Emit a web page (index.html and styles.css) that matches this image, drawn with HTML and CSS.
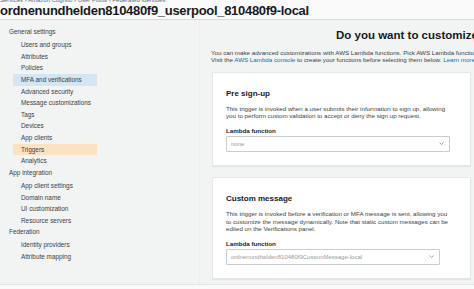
FILE: index.html
```html
<!DOCTYPE html>
<html lang="en">
<head>
  <meta charset="UTF-8"/>
  <title>User pool triggers</title>
  <link rel="stylesheet" href="styles.css">
</head>
<body>
<header class="top">
  <div class="crumbs">Services &rsaquo; Amazon Cognito &rsaquo; User Pools &rsaquo; Federated Identities</div>
  <h1>ordnenundhelden810480f9_userpool_810480f9-local</h1>
</header>

<div class="layout">
  <!-- Side navigation -->
  <nav class="side">
    <div class="group">General settings</div>
    <ul>
      <li>Users and groups</li>
      <li>Attributes</li>
      <li>Policies</li>
      <li class="hl-blue">MFA and verifications</li>
      <li>Advanced security</li>
      <li>Message customizations</li>
      <li>Tags</li>
      <li>Devices</li>
      <li>App clients</li>
      <li class="hl-orange">Triggers</li>
      <li>Analytics</li>
    </ul>
    <div class="group">App integration</div>
    <ul>
      <li>App client settings</li>
      <li>Domain name</li>
      <li>UI customization</li>
      <li>Resource servers</li>
    </ul>
    <div class="group">Federation</div>
    <ul>
      <li>Identity providers</li>
      <li>Attribute mapping</li>
    </ul>
  </nav>

  <!-- Triggers -->
  <main class="main">
    <h2>Do you want to customize workflows with triggers?</h2>
    <p class="intro">
      You can make advanced customizations with AWS Lambda functions. Pick AWS Lambda functions to trigger during user pool operations.<br>
      Visit the <a href="#">AWS Lambda console</a> to create your functions before selecting them below. <a href="#">Learn more.</a>
    </p>

    <section class="card">
      <h3>Pre sign-up</h3>
      <p class="desc">This trigger is invoked when a user submits their information to sign up, allowing you to perform custom validation to accept or deny the sign up request.</p>
      <label>Lambda function</label>
      <div class="select">
        <span class="value">none</span>
        <svg width="5" height="3" viewBox="0 0 5 3"><path d="M0.5 0.5 L2.5 2.5 L4.5 0.5" fill="none" stroke="#8a8a8a" stroke-width="0.8"/></svg>
      </div>
    </section>

    <section class="card">
      <h3>Custom message</h3>
      <p class="desc">This trigger is invoked before a verification or MFA message is sent, allowing you to customize the message dynamically. Note that static custom messages can be edited on the Verifications panel.</p>
      <label>Lambda function</label>
      <div class="select narrow">
        <span class="value">ordnenundhelden810480f9CustomMessage-local</span>
        <svg width="5" height="3" viewBox="0 0 5 3"><path d="M0.5 0.5 L2.5 2.5 L4.5 0.5" fill="none" stroke="#8a8a8a" stroke-width="0.8"/></svg>
      </div>
    </section>
  </main>
</div>

<footer class="bottom"></footer>
</body>
</html>
```

FILE: styles.css
```css
:root{
  --bg:#f2f3f3;
  --text:#3b3f44;
  --dark:#16191f;
  --link:#0073bb;
  --line:#d5dbdb;
}
*{margin:0;padding:0;box-sizing:border-box}
body{background:#fafafa;color:var(--text);font-family:"Liberation Sans",Arial,Helvetica,sans-serif;overflow:hidden;height:289px}

/* Header */
.top{background:#fafafa;border-bottom:1px solid var(--line)}
.crumbs{height:3px;overflow:hidden;font-size:6px;line-height:1px;color:#5a6b86;white-space:nowrap}
.top h1{font-size:13px;line-height:16px;font-weight:700;color:var(--dark);white-space:nowrap;letter-spacing:-0.3px}

/* Layout */
.layout{display:flex;height:265px;border-bottom:1px solid #e3e5e5;background:var(--bg)}
.side{flex:0 0 200px;padding-top:6px;font-size:6.4px;color:var(--text);border-right:1px solid #eceded}
.side ul{list-style:none}
.group{padding-left:9px;line-height:11.6px;margin-bottom:1.6px}
.side li{margin-left:13px;width:84px;padding-left:8px;line-height:11.6px;white-space:nowrap}
.side li.hl-blue{background:#d4e6f3}
.side li.hl-orange{background:#fbe2c3}

/* Main */
.main{flex:1;overflow:hidden;padding:8px 0 0 11px}
.main h2{font-size:11.5px;line-height:14px;font-weight:700;color:var(--dark);padding-left:125px;white-space:nowrap}
.intro{margin-top:7px;font-size:6.2px;line-height:7.3px;white-space:nowrap;color:var(--text)}
.intro a{color:var(--link);text-decoration:none}

.card{width:259px;margin:8px 0 0 1px;background:#fff;border:1px solid #e6e8e8;box-shadow:0 1px 1px rgba(0,0,0,.06);padding:15px 13px 13px}
.card + .card{margin-top:11px}
.card h3{font-size:8px;line-height:11px;font-weight:700;color:var(--dark)}
.desc{margin-top:6px;max-width:226px;font-size:6.2px;line-height:7.5px;color:var(--text)}
.card label{display:block;margin-top:7.5px;font-size:6.2px;line-height:8px;font-weight:700;color:var(--dark)}
.select{display:flex;align-items:center;justify-content:space-between;width:224px;height:16.5px;margin-top:0.5px;padding:0 5px 0 4px;border:1px solid #c9cdcd;border-radius:1px;background:#fff}
.select.narrow{width:214px}
.select .value{font-size:6px;color:#9a9a9a;white-space:nowrap}

.bottom{height:3px;background:#fafafa}
```
